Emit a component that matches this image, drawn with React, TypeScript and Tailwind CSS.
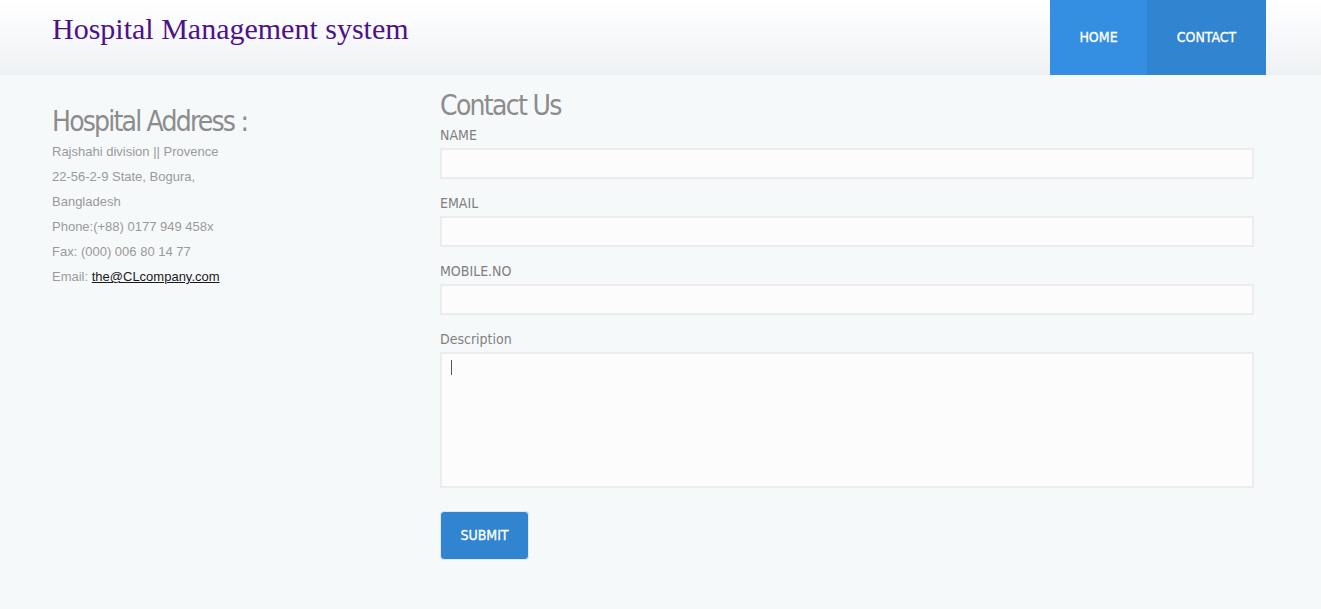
export default function App() {
  const fields = ["NAME", "EMAIL", "MOBILE.NO"];
  return (
    <div className="min-h-[609px] w-full bg-[#f6f9fa]">
      <header className="flex h-[75px] items-start justify-between bg-gradient-to-b from-white to-[#eef1f4] pl-[52px] pr-[55px]">
        <h1 className="pt-[11px] text-[30px] leading-[36px] text-[#4d118a] [font-family:'Liberation_Serif',serif]">
          Hospital Management system
        </h1>
        <nav className="flex h-[75px] text-[14px] text-white [font-family:'DejaVu_Sans_Condensed',sans-serif] [-webkit-text-stroke:0.3px_white]">
          <a className="flex w-[97px] items-center justify-center bg-[#348fe2]">HOME</a>
          <a className="flex w-[119px] items-center justify-center bg-[#3184d0]">CONTACT</a>
        </nav>
      </header>

      <main className="flex pl-[52px]">
        <section className="w-[388px] pt-[30px]">
          <h2 className="text-[28px] leading-[34px] tracking-[-1.8px] text-[#8c8c8c] [font-family:'DejaVu_Sans_Condensed',sans-serif]">
            Hospital Address :
          </h2>
          <div className="text-[13px] leading-[25px] text-[#9a9a9a] [font-family:'Liberation_Sans',sans-serif]">
            <p>Rajshahi division || Provence</p>
            <p>22-56-2-9 State, Bogura,</p>
            <p>Bangladesh</p>
            <p>Phone:(+88) 0177 949 458x</p>
            <p>Fax: (000) 006 80 14 77</p>
            <p>
              Email: <a className="text-[#1a1a1a] underline">the@CLcompany.com</a>
            </p>
          </div>
        </section>

        <section className="w-[814px] pt-[14px] [font-family:'DejaVu_Sans_Condensed',sans-serif]">
          <h2 className="text-[28px] leading-[34px] tracking-[-1.7px] text-[#8c8c8c]">Contact Us</h2>
          <form className="mt-[4px] flex flex-col">
            {fields.map((f) => (
              <div key={f} className="mb-[16px] flex flex-col">
                <label className="mb-[5px] text-[14px] leading-[16px] text-[#808080]">{f}</label>
                <input className="h-[31px] border-2 border-[#ececec] bg-[#fcfcfc] outline-none" />
              </div>
            ))}
            <label className="mb-[5px] text-[14px] leading-[16px] text-[#808080]">Description</label>
            <div className="relative h-[136px] border-2 border-[#ececec] bg-[#fcfcfc]">
              <span className="absolute left-[9px] top-[6px] h-[15px] w-px bg-[#555]" />
            </div>
            <button
              type="button"
              className="mt-[23px] h-[49px] w-[89px] rounded-[4px] border border-[#e3e8ee] bg-[#3184d0] text-[14px] text-white [-webkit-text-stroke:0.3px_white]"
            >
              SUBMIT
            </button>
          </form>
        </section>
      </main>
    </div>
  );
}
